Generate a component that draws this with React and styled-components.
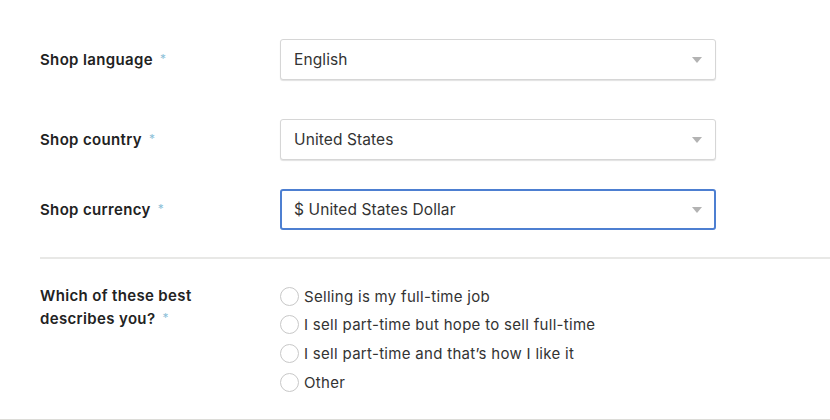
import React from 'react'
import styled, { createGlobalStyle } from 'styled-components'

const GlobalStyle = createGlobalStyle`
  html, body {
    margin: 0;
    padding: 0;
    background: #fff;
  }
  body {
    font-family: Inter, "Noto Sans", Arial, sans-serif;
    color: #222;
  }
`

const Page = styled.main`
  width: 830px;
  height: 420px;
  box-sizing: border-box;
  border-bottom: 1px solid #dcdcd8;
  padding: 39px 0 0 40px;
  overflow: hidden;
`

const Row = styled.div`
  display: flex;
  align-items: ${(p) => (p.$top ? 'flex-start' : 'center')};
  margin-bottom: ${(p) => p.$gap || 0}px;
`

const Label = styled.label`
  width: 240px;
  flex: none;
  font-size: 15px;
  font-weight: 600;
  letter-spacing: 0.35px;
  line-height: 22px;
  color: #222;
`

const Star = styled.span`
  color: #8cc0d8;
  font-size: 12px;
  font-weight: 400;
  margin-left: 7px;
  vertical-align: 2px;
`

const Select = styled.div`
  width: 436px;
  height: 41px;
  box-sizing: border-box;
  display: flex;
  align-items: center;
  justify-content: space-between;
  padding: 0 13px;
  background: #fff;
  border: ${(p) => (p.$focus ? '2px solid #4d7fd1' : '1px solid #d6d6d6')};
  border-radius: 3px;
  box-shadow: ${(p) => (p.$focus ? 'none' : '0 1px 1px rgba(0,0,0,0.12)')};
  font-size: 15.5px;
  letter-spacing: 0.1px;
  color: #333;
  ${(p) => (p.$focus ? 'padding-left: 12px; padding-right: 12px;' : '')}
`

const Arrow = styled.span`
  width: 0;
  height: 0;
  border-left: 5px solid transparent;
  border-right: 5px solid transparent;
  border-top: 6px solid #b3b3b3;
`

const Divider = styled.hr`
  border: 0;
  border-top: 2px solid #e8e8e6;
  margin: 27px 0 26px;
`

const Options = styled.div`
  display: flex;
  flex-direction: column;
  gap: 6.7px;
`

const Option = styled.label`
  display: flex;
  align-items: center;
  gap: 5px;
  font-size: 15px;
  letter-spacing: 0.3px;
  color: #333;
  height: 22px;
`

const Radio = styled.span`
  width: 19px;
  height: 19px;
  box-sizing: border-box;
  border-radius: 50%;
  border: 1px solid #c8c8c8;
  background: #fff;
  flex: none;
`

const options = [
  'Selling is my full-time job',
  'I sell part-time but hope to sell full-time',
  'I sell part-time and that’s how I like it',
  'Other',
]

const App = () => {
  return (
    <>
      <GlobalStyle />
      <Page>
        <Row $gap={39}>
          <Label>
            Shop language<Star>*</Star>
          </Label>
          <Select>
            English
            <Arrow />
          </Select>
        </Row>
        <Row $gap={29}>
          <Label>
            Shop country<Star>*</Star>
          </Label>
          <Select>
            United States
            <Arrow />
          </Select>
        </Row>
        <Row>
          <Label>
            Shop currency<Star>*</Star>
          </Label>
          <Select $focus>
            $ United States Dollar
            <Arrow />
          </Select>
        </Row>
        <Divider />
        <Row $top>
          <Label>
            Which of these best
            <br />
            describes you?<Star>*</Star>
          </Label>
          <Options>
            {options.map((o) => (
              <Option key={o}>
                <Radio />
                {o}
              </Option>
            ))}
          </Options>
        </Row>
      </Page>
    </>
  )
}

export default App
